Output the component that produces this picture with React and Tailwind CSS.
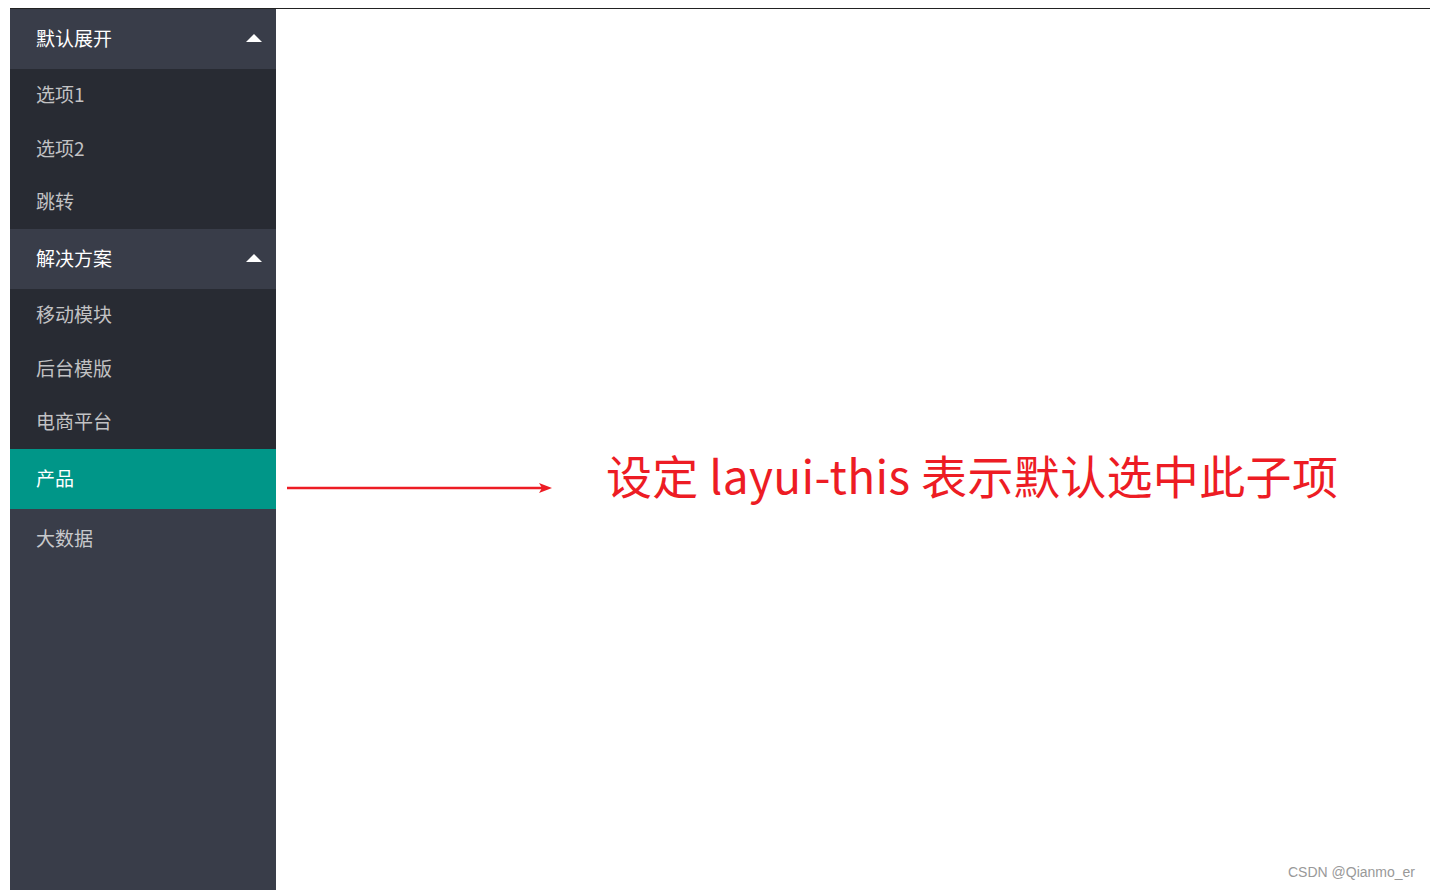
// layui-style side nav with an annotation pointing at the selected child
const groups = [
  { title: "默认展开", open: true, items: ["选项1", "选项2", "跳转"] },
  { title: "解决方案", open: true, items: ["移动模块", "后台模版", "电商平台"] },
];

const font = { fontFamily: '"Noto Sans CJK SC", "Noto Sans", sans-serif' };

function Caret() {
  return (
    <svg width="16" height="8" viewBox="0 0 16 8" className="mr-[14px]">
      <polygon points="0,8 8,0 16,8" fill="#fff" />
    </svg>
  );
}

function SideNav() {
  return (
    <nav className="w-[266px] shrink-0 bg-[#393d49] text-[19px]" style={font}>
      {groups.map((g) => (
        <div key={g.title}>
          <div className="flex h-[60px] items-center justify-between pb-[2px] pl-[26px] text-white">
            <span>{g.title}</span>
            <Caret />
          </div>
          {g.open && (
            <div className="bg-[#282b33]">
              {g.items.map((it) => (
                <div key={it} className="flex h-[53.3px] items-center pb-[2px] pl-[26px] text-[#c2c2c4]">
                  {it}
                </div>
              ))}
            </div>
          )}
        </div>
      ))}
      <div className="flex h-[60px] items-center bg-[#009688] pb-[2px] pl-[26px] text-white">产品</div>
      <div className="flex h-[60px] items-center pb-[2px] pl-[26px] text-[#c8c9cc]">大数据</div>
    </nav>
  );
}

export default function App() {
  return (
    <div className="relative h-[890px] w-[1430px] overflow-hidden bg-white pl-[10px] pt-[8px]">
      <div className="flex h-full flex-col border-t border-[#222]">
        <div className="flex flex-1">
          <SideNav />
          <main className="flex-1 pt-[442px]">
            <div className="flex items-center">
              <svg width="266" height="14" viewBox="0 0 266 14" className="ml-[11px] mt-[28px]">
                <line x1="0" y1="7" x2="256" y2="7" stroke="#ed1c24" strokeWidth="2.5" />
                <polygon points="252,2 265,7 252,12 255,7" fill="#ed1c24" />
              </svg>
              <span
                className="ml-[53px] text-[46px] leading-none tracking-[0.35px] text-[#ed1c24]"
                style={font}
              >
                设定 layui-this 表示默认选中此子项
              </span>
            </div>
          </main>
        </div>
      </div>
      <span
        className="absolute bottom-[7px] right-[15px] text-[14px] text-[#999]"
        style={{ fontFamily: '"Liberation Sans", Arial, sans-serif' }}
      >
        CSDN @Qianmo_er
      </span>
    </div>
  );
}
